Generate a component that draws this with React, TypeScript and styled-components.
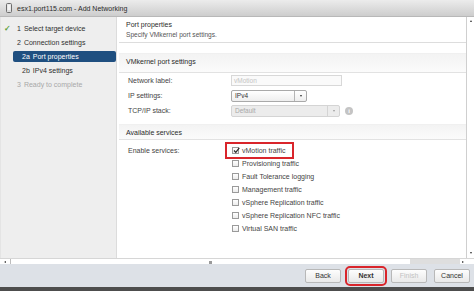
import React from "react";
import styled, { createGlobalStyle } from "styled-components";

const GlobalStyle = createGlobalStyle`
  html, body {
    margin: 0;
    padding: 0;
    background: #ffffff;
  }
  body {
    font-family: "Liberation Sans", Arial, sans-serif;
    font-size: 7px;
    color: #333333;
  }
`;

const Window = styled.div`
  width: 474px;
  height: 291px;
  display: flex;
  flex-direction: column;
  overflow: hidden;
  background: #ffffff;
`;

const TitleBar = styled.div`
  height: 16px;
  display: flex;
  align-items: center;
  gap: 5px;
  padding-left: 6px;
  background: linear-gradient(#ececec, #cdcdcd);
  border-bottom: 1px solid #b8b8b8;
  font-size: 7px;
  color: #2b2b2b;
`;

const Body = styled.div`
  height: 241px;
  display: flex;
`;

const Nav = styled.div`
  width: 117px;
  padding-top: 4px;
  background: #eeeeee;
  border-right: 1px solid #dcdcdc;
  border-left: 1px solid #e4e4e4;
  box-sizing: border-box;
  display: flex;
  flex-direction: column;
`;

const NavItem = styled.div<{ $sub?: boolean; $active?: boolean; $muted?: boolean }>`
  height: 11px;
  margin: 1.5px 0 1.5px ${(p) => (p.$sub ? "12px" : "0")};
  padding-left: ${(p) => (p.$sub ? "9px" : "16px")};
  display: flex;
  align-items: center;
  gap: 3px;
  position: relative;
  border-radius: 2px;
  background: ${(p) => (p.$active ? "#1f4f80" : "transparent")};
  color: ${(p) => (p.$active ? "#ffffff" : p.$muted ? "#a8a8a8" : "#2e2e2e")};
  font-size: 7px;
`;

const Check = styled.span`
  position: absolute;
  left: 3px;
  top: 1px;
  color: #5a9e3a;
  font-size: 8px;
  font-weight: bold;
`;

const Main = styled.div`
  flex: 1;
  display: flex;
  min-width: 0;
`;

const Content = styled.div`
  flex: 1;
  display: flex;
  flex-direction: column;
  min-width: 0;
`;

const Header = styled.div`
  padding: 3px 0 3px 7px;
  border-bottom: 1px solid #dddddd;
  margin-left: 2px;
`;

const HeaderTitle = styled.div`
  line-height: 10px;
  font-size: 7px;
  color: #2b2b2b;
`;

const HeaderSub = styled.div`
  line-height: 9px;
  font-size: 6.6px;
  color: #555555;
`;

const Band = styled.div<{ $top: number; $height: number }>`
  margin-top: ${(p) => p.$top}px;
  height: ${(p) => p.$height}px;
  padding: 3px 0 0 7px;
  margin-left: 2px;
  box-sizing: border-box;
  background: linear-gradient(#f3f3f3, #fbfbfb);
  border-top: 1px solid #f0f0f0;
  border-bottom: 1px solid #e2e2e2;
  line-height: 10px;
  font-size: 7px;
  color: #2b2b2b;
`;

const Form = styled.div`
  display: grid;
  grid-template-columns: 103px 1fr;
  grid-auto-rows: 15px;
  align-items: center;
  padding-left: 11px;
`;

const Label = styled.div`
  color: #444444;
  font-size: 7px;
`;

const FieldRow = styled.div`
  display: flex;
  align-items: center;
  gap: 5px;
`;

const TextInput = styled.div`
  width: 111px;
  height: 11px;
  box-sizing: border-box;
  border: 1px solid #d8d8d8;
  background: #fafafa;
  color: #c4c4c4;
  padding-left: 2px;
  display: flex;
  align-items: center;
  font-size: 6.5px;
`;

const Select = styled.div<{ $width: number; $disabled?: boolean }>`
  width: ${(p) => p.$width}px;
  height: 12px;
  box-sizing: border-box;
  border: 1px solid ${(p) => (p.$disabled ? "#d4d4d4" : "#a9a9a9")};
  border-radius: 2px;
  background: ${(p) => (p.$disabled ? "#ececec" : "linear-gradient(#ffffff, #eeeeee)")};
  color: ${(p) => (p.$disabled ? "#a8a8a8" : "#333333")};
  display: flex;
  font-size: 6.5px;
`;

const SelectText = styled.span`
  flex: 1;
  padding-left: 3px;
  display: flex;
  align-items: center;
`;

const SelectArrow = styled.span<{ $disabled?: boolean }>`
  width: 11px;
  border-left: 1px solid ${(p) => (p.$disabled ? "#d4d4d4" : "#b5b5b5")};
  display: flex;
  align-items: center;
  justify-content: center;
  &::after {
    content: "";
    border-left: 1.5px solid transparent;
    border-right: 1.5px solid transparent;
    border-top: 2px solid ${(p) => (p.$disabled ? "#9a9a9a" : "#333333")};
  }
`;

const InfoIcon = styled.span`
  width: 8px;
  height: 8px;
  border-radius: 50%;
  background: #c4c4c4;
  color: #ffffff;
  font-size: 6px;
  font-weight: bold;
  display: flex;
  align-items: center;
  justify-content: center;
`;

const Services = styled.div`
  display: grid;
  grid-template-columns: 103px 1fr;
  padding: 4px 0 0 11px;
`;

const ServiceLabel = styled.div`
  height: 13px;
  display: flex;
  align-items: center;
  color: #444444;
  font-size: 7px;
`;

const ServiceList = styled.div`
  display: flex;
  flex-direction: column;
  padding-left: 1px;
`;

const ServiceItem = styled.label<{ $highlight?: boolean }>`
  height: 13px;
  width: fit-content;
  display: flex;
  align-items: center;
  gap: 3px;
  font-size: 7px;
  color: #444444;
  box-sizing: content-box;
  ${(p) =>
    p.$highlight &&
    `
    margin: -2px 0 -2px -7px;
    padding: 0 7px 0 5px;
    border: 2px solid #d9252b;
  `}
`;

const Box = styled.span`
  width: 7px;
  height: 7px;
  box-sizing: border-box;
  border: 1px solid #9a9a9a;
  background: linear-gradient(#ffffff, #ececec);
  position: relative;
  display: inline-block;
`;

const VScroll = styled.div`
  width: 8px;
  border-left: 1px solid #cfcfcf;
  box-sizing: border-box;
  display: flex;
  flex-direction: column;
  justify-content: space-between;
  align-items: center;
  padding: 3px 0 4px;
  background: #ffffff;
`;

const ArrowUp = styled.span`
  border-left: 1.5px solid transparent;
  border-right: 1.5px solid transparent;
  border-bottom: 2px solid #333333;
`;

const ArrowDown = styled.span`
  border-left: 1.5px solid transparent;
  border-right: 1.5px solid transparent;
  border-top: 2px solid #333333;
`;

const HScroll = styled.div`
  height: 6px;
  display: flex;
  align-items: center;
  border-top: 1px solid #d6d6d6;
  box-sizing: border-box;
  background: #ffffff;
  position: relative;
`;

const HArrowLeft = styled.span`
  margin-left: 4px;
  border-top: 1.5px solid transparent;
  border-bottom: 1.5px solid transparent;
  border-right: 2px solid #333333;
`;

const HDivider = styled.span`
  width: 1px;
  height: 5px;
  background: #bdbdbd;
  margin-left: 4px;
`;

const HSpacer = styled.span`
  flex: 1;
`;

const HThumb = styled.span`
  width: 50px;
  height: 5px;
  background: #dedede;
`;

const HArrowRight = styled.span`
  margin: 0 10px 0 2px;
  border-top: 1.5px solid transparent;
  border-bottom: 1.5px solid transparent;
  border-left: 2px solid #333333;
`;

const Grip = styled.span`
  position: absolute;
  left: 209px;
  top: 2px;
  width: 3px;
  height: 3px;
  background-image: radial-gradient(#9a9a9a 0.6px, transparent 0.7px);
  background-size: 1.5px 1.5px;
`;

const Footer = styled.div`
  height: 23px;
  background: #dde1e7;
  display: flex;
  align-items: center;
  justify-content: flex-end;
  gap: 7px;
  padding-right: 4px;
`;

const Button = styled.button<{ $primary?: boolean; $disabled?: boolean; $marked?: boolean }>`
  width: 36px;
  height: 14px;
  padding: 0;
  border: 1px solid #b8b8b8;
  border-radius: 2px;
  background: linear-gradient(#fdfdfd, #e9e9e9);
  font-family: "Liberation Sans", Arial, sans-serif;
  font-size: 7px;
  font-weight: ${(p) => (p.$primary ? "bold" : "normal")};
  color: ${(p) => (p.$disabled ? "#c2c2c2" : "#333333")};
  outline: ${(p) => (p.$marked ? "2px solid #d9252b" : "none")};
  outline-offset: 1px;
`;

const BottomStrip = styled.div`
  height: 4px;
  background: #4d4d4d;
`;

const DeviceIcon = () => (
  <svg width="6" height="10" viewBox="0 0 6 10">
    <rect x="0.5" y="0.5" width="5" height="9" rx="1" fill="#dcdcdc" stroke="#6d6d6d" />
    <rect x="1.5" y="1.5" width="3" height="5.5" fill="#f4f4f4" />
  </svg>
);

const CheckMark = () => (
  <svg width="7" height="7" viewBox="0 0 7 7" style={{ position: "absolute", left: 0, top: -1 }}>
    <path d="M1 3.5 L2.8 5.4 L6.3 0.8" fill="none" stroke="#2b2b2b" strokeWidth="1.2" />
  </svg>
);

const services = [
  "vMotion traffic",
  "Provisioning traffic",
  "Fault Tolerance logging",
  "Management traffic",
  "vSphere Replication traffic",
  "vSphere Replication NFC traffic",
  "Virtual SAN traffic",
];

export default function App() {
  return (
    <>
      <GlobalStyle />
      <Window>
        <TitleBar>
          <DeviceIcon />
          <span>esx1.port115.com - Add Networking</span>
        </TitleBar>
        <Body>
          <Nav>
            <NavItem>
              <Check>✓</Check>
              <span>1</span>
              <span>Select target device</span>
            </NavItem>
            <NavItem>
              <span>2</span>
              <span>Connection settings</span>
            </NavItem>
            <NavItem $sub $active>
              <span>2a</span>
              <span>Port properties</span>
            </NavItem>
            <NavItem $sub>
              <span>2b</span>
              <span>IPv4 settings</span>
            </NavItem>
            <NavItem $muted>
              <span>3</span>
              <span>Ready to complete</span>
            </NavItem>
          </Nav>
          <Main>
            <Content>
              <Header>
                <HeaderTitle>Port properties</HeaderTitle>
                <HeaderSub>Specify VMkernel port settings.</HeaderSub>
              </Header>
              <Band $top={10} $height={20}>VMkernel port settings</Band>
              <Form>
                <Label>Network label:</Label>
                <FieldRow>
                  <TextInput>vMotion</TextInput>
                </FieldRow>
                <Label>IP settings:</Label>
                <FieldRow>
                  <Select $width={76}>
                    <SelectText>IPv4</SelectText>
                    <SelectArrow />
                  </Select>
                </FieldRow>
                <Label>TCP/IP stack:</Label>
                <FieldRow>
                  <Select $width={109} $disabled>
                    <SelectText>Default</SelectText>
                    <SelectArrow $disabled />
                  </Select>
                  <InfoIcon>i</InfoIcon>
                </FieldRow>
              </Form>
              <Band $top={6} $height={16}>Available services</Band>
              <Services>
                <ServiceLabel>Enable services:</ServiceLabel>
                <ServiceList>
                  {services.map((s, i) => (
                    <ServiceItem key={s} $highlight={i === 0}>
                      <Box>{i === 0 && <CheckMark />}</Box>
                      <span>{s}</span>
                    </ServiceItem>
                  ))}
                </ServiceList>
              </Services>
            </Content>
            <VScroll>
              <ArrowUp />
              <ArrowDown />
            </VScroll>
          </Main>
        </Body>
        <HScroll>
          <HArrowLeft />
          <HDivider />
          <HSpacer />
          <HThumb />
          <HArrowRight />
          <Grip />
        </HScroll>
        <Footer>
          <Button>Back</Button>
          <Button $primary $marked>Next</Button>
          <Button $disabled>Finish</Button>
          <Button>Cancel</Button>
        </Footer>
        <BottomStrip />
      </Window>
    </>
  );
}
